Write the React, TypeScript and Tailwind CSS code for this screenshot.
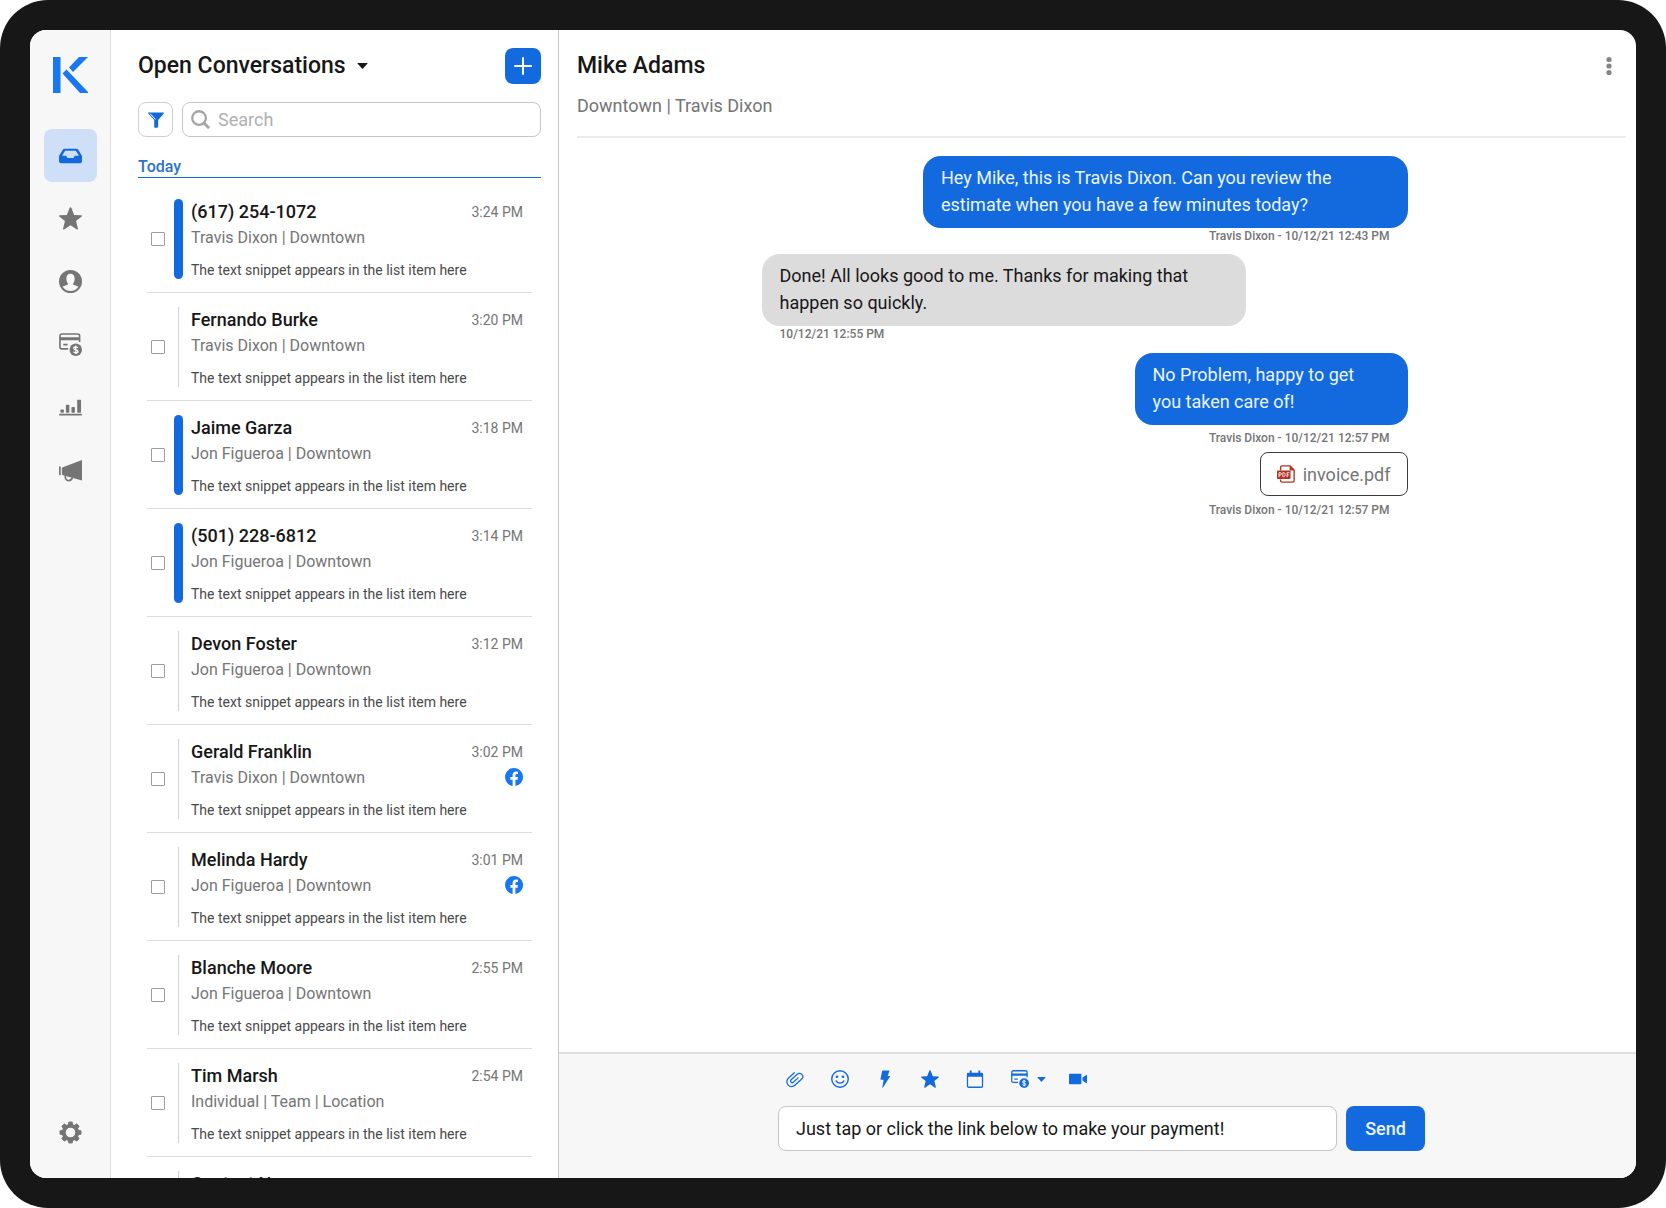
import { useState } from 'react';
import type { ReactNode } from 'react';
import clsx from 'clsx';

type IconProps = { className?: string };

type Conversation = {
  name: string;
  owner: string;
  time: string;
  unread?: boolean;
  facebook?: boolean;
};

const SNIPPET = 'The text snippet appears in the list item here';

const conversations: Conversation[] = [
  { name: '(617) 254-1072', owner: 'Travis Dixon | Downtown', time: '3:24 PM', unread: true },
  { name: 'Fernando Burke', owner: 'Travis Dixon | Downtown', time: '3:20 PM' },
  { name: 'Jaime Garza', owner: 'Jon Figueroa | Downtown', time: '3:18 PM', unread: true },
  { name: '(501) 228-6812', owner: 'Jon Figueroa | Downtown', time: '3:14 PM', unread: true },
  { name: 'Devon Foster', owner: 'Jon Figueroa | Downtown', time: '3:12 PM' },
  { name: 'Gerald Franklin', owner: 'Travis Dixon | Downtown', time: '3:02 PM', facebook: true },
  { name: 'Melinda Hardy', owner: 'Jon Figueroa | Downtown', time: '3:01 PM', facebook: true },
  { name: 'Blanche Moore', owner: 'Jon Figueroa | Downtown', time: '2:55 PM' },
  { name: 'Tim Marsh', owner: 'Individual | Team | Location', time: '2:54 PM' },
  { name: 'Contact Name', owner: 'Individual | Team | Location', time: '2:34 PM' },
];

function LogoIcon({ className }: IconProps) {
  return (
    <svg viewBox="-1 0 36 36" fill="currentColor" className={className} aria-hidden="true">
      <path d="M0 0h7.500v36H0z" />
      <path d="M26 0h9L20 15l-4-4.500z" />
      <path d="M9.500 16.500l4-4L36 36h-9z" />
    </svg>
  );
}

function InboxIcon({ className }: IconProps) {
  return (
    <svg viewBox="0 0 24 24" fill="currentColor" className={className} aria-hidden="true">
      <path
        fillRule="evenodd"
        d="M5.500 5h13c.6 0 1.100.3 1.400.8l3.700 6c.2.3.4.8.4 1.200v5c0 1.100-.9 2-2 2H2c-1.100 0-2-.9-2-2v-5c0-.4.1-.9.400-1.200l3.700-6c.3-.5.800-.8 1.400-.8zM6.400 7l-3.200 5.300h4c.5 0 .8.2.9.700l.2.700c.2.500.5.800 1 .8h5.400c.5 0 .8-.3 1-.8l.2-.7c.1-.5.4-.7.9-.7h4L17.600 7z"
      />
    </svg>
  );
}

function StarIcon({ className }: IconProps) {
  return (
    <svg viewBox="0 0 24 24" fill="currentColor" className={className} aria-hidden="true">
      <path d="M12 .3c.4 0 .7.2.9.600l2.900 7.400 7.500.4c.7 0 .9.800.4 1.200l-5.900 4.800 2 8c.1.7-.5 1.100-1.100.8L12 19.100l-6.700 4.400c-.6.300-1.200-.1-1.100-.8l2-8L.3 9.900c-.5-.4-.3-1.200.4-1.200l7.500-.4 2.900-7.400c.2-.4.5-.6.9-.600z" />
    </svg>
  );
}

function UserIcon({ className }: IconProps) {
  return (
    <svg viewBox="0 0 24 24" fill="currentColor" className={className} aria-hidden="true">
      <path
        fillRule="evenodd"
        d="M12 0a12 12 0 1 0 0 24 12 12 0 0 0 0-24zM3.700 17.600c1.500-1 3.300-1.500 4.600-2 .9-.3 1.200-.8 1-1.500-1-1.300-1.600-2.900-1.600-5C7.700 5.800 9.300 4 12 4s4.300 1.800 4.300 5.100c0 2.100-.6 3.700-1.600 5-.2.700.1 1.200 1 1.500 1.300.5 3.100 1 4.600 2a10 10 0 0 1-16.600 0z"
      />
    </svg>
  );
}

function PaymentIcon({ className }: IconProps) {
  return (
    <svg viewBox="0 0 24 24" fill="none" className={className} aria-hidden="true">
      <path
        d="M9.500 16.500H3a2 2 0 0 1-2-2V3a2 2 0 0 1 2-2h16.500a2 2 0 0 1 2 2v6.500"
        stroke="currentColor"
        strokeWidth="1.700"
      />
      <path d="M1 4.500h20.500v3H1zM4.500 11.200H9v1.800H4.500z" fill="currentColor" />
      <circle cx="17.500" cy="17.500" r="6.500" fill="currentColor" />
      <path
        d="M19.700 15.600c-.3-.8-1.200-1.200-2.200-1.200-1.200 0-2.200.6-2.200 1.600 0 2.200 4.500 1 4.500 3.200 0 1-1 1.500-2.300 1.500-1.100 0-2-.4-2.300-1.300M17.500 13v9"
        stroke="white"
        strokeWidth="1.300"
      />
    </svg>
  );
}

function ChartIcon({ className }: IconProps) {
  return (
    <svg viewBox="0 0 24 24" fill="currentColor" className={className} aria-hidden="true">
      <rect x="0" y="18.500" width="24" height="1.800" rx=".8" />
      <rect x="1.500" y="14" width="3.600" height="3.600" rx=".8" />
      <rect x="7.200" y="9" width="3.600" height="8.600" rx=".8" />
      <rect x="13" y="11.500" width="3.600" height="6.100" rx=".8" />
      <rect x="19" y="4" width="4" height="13.600" rx=".8" />
    </svg>
  );
}

function MegaphoneIcon({ className }: IconProps) {
  return (
    <svg viewBox="0 0 24 24" fill="currentColor" className={className} aria-hidden="true">
      <path d="M24 1v21.500L4 17V8.500z" />
      <rect x="0" y="7.500" width="1.800" height="9.500" rx=".9" />
      <path d="M3 9h1.500v7.500H3z" />
      <path d="M6.600 17.500c-.4 3 1.100 5 3.400 5s3.500-1.300 3.900-3.200" fill="none" stroke="currentColor" strokeWidth="1.700" />
    </svg>
  );
}

function GearIcon({ className }: IconProps) {
  return (
    <svg viewBox="0 0 24 24" className={className} aria-hidden="true">
      <circle cx="12" cy="12" r="7" fill="none" stroke="currentColor" strokeWidth="4" />
      {[0, 45, 90, 135, 180, 225, 270, 315].map((angle) => (
        <path
          key={angle}
          d="M9.500 4.500L10.200 1h3.600L14.500 4.500z"
          fill="currentColor"
          stroke="currentColor"
          strokeWidth=".8"
          strokeLinejoin="round"
          transform={`rotate(${angle} 12 12)`}
        />
      ))}
    </svg>
  );
}

function FilterIcon({ className }: IconProps) {
  return (
    <svg viewBox="0 0 16 16" className={className} aria-hidden="true">
      <path
        d="M.6.500h14.800c.5 0 .7.500.4.900L10.200 8v6.600c0 .8-.4 1.200-1.200 1.200H7.200c-.6 0-1-.4-1-1V8L.2 1.400C-.1 1 .1.500.6.500z"
        fill="currentColor"
      />
      <path d="M2.500 2l4.700 5.200" stroke="white" strokeWidth="1" strokeLinecap="round" />
    </svg>
  );
}

function SearchIcon({ className }: IconProps) {
  return (
    <svg viewBox="0 0 20 20" fill="none" stroke="currentColor" className={className} aria-hidden="true">
      <circle cx="8.500" cy="8.500" r="7.200" strokeWidth="2.400" />
      <path d="M13.700 13.700l4.400 4.400" strokeWidth="3" strokeLinecap="round" />
    </svg>
  );
}

function PlusIcon({ className }: IconProps) {
  return (
    <svg viewBox="0 0 18 18" fill="none" stroke="currentColor" className={className} aria-hidden="true">
      <path d="M9 1v16M1 9h16" strokeWidth="2" strokeLinecap="round" />
    </svg>
  );
}

function CaretIcon({ className }: IconProps) {
  return (
    <svg viewBox="0 0 10 6" fill="currentColor" className={className} aria-hidden="true">
      <path d="M.5 0h9c.5 0 .6.400.3.700L5.500 5.500c-.3.300-.7.300-1 0L.2.700C-.1.400 0 0 .5 0z" />
    </svg>
  );
}

function FacebookIcon({ className }: IconProps) {
  return (
    <svg viewBox="0 0 24 24" fill="currentColor" className={className} aria-hidden="true">
      <path d="M24 12.070C24 5.400 18.630 0 12 0S0 5.400 0 12.070C0 18.100 4.390 23.100 10.130 24v-8.440H7.080v-3.490h3.050V9.410c0-3.020 1.790-4.690 4.530-4.690 1.310 0 2.680.240 2.680.240v2.970h-1.510c-1.490 0-1.960.930-1.960 1.890v2.250h3.330l-.530 3.490h-2.800V24C19.610 23.100 24 18.100 24 12.070z" />
    </svg>
  );
}

function DotsIcon({ className }: IconProps) {
  return (
    <svg viewBox="0 0 6 20" fill="currentColor" className={className} aria-hidden="true">
      <circle cx="3" cy="3.500" r="2.600" />
      <circle cx="3" cy="10" r="2.600" />
      <circle cx="3" cy="16.500" r="2.600" />
    </svg>
  );
}

function ClipIcon({ className }: IconProps) {
  return (
    <svg viewBox="0 0 24 24" fill="none" stroke="currentColor" className={className} aria-hidden="true">
      <path
        d="M16 13.700H7.500a2.200 2.200 0 0 1 0-4.400H18.500a4.400 4.400 0 0 1 0 8.800H6.200a6.400 6.400 0 0 1 0-12.800H17"
        strokeWidth="1.700"
        strokeLinecap="round"
        transform="rotate(-43 12 12)"
      />
    </svg>
  );
}

function SmileIcon({ className }: IconProps) {
  return (
    <svg viewBox="0 0 24 24" fill="none" stroke="currentColor" className={className} aria-hidden="true">
      <circle cx="12" cy="12" r="11" strokeWidth="1.900" />
      <path d="M6.800 14.500c2 4 8.400 4 10.400 0" strokeWidth="1.900" strokeLinecap="round" />
      <circle cx="8" cy="9" r="1.800" fill="currentColor" stroke="none" />
      <circle cx="16" cy="9" r="1.800" fill="currentColor" stroke="none" />
    </svg>
  );
}

function BoltIcon({ className }: IconProps) {
  return (
    <svg viewBox="0 0 24 24" fill="currentColor" className={className} aria-hidden="true">
      <path d="M9 .5h8.500c.4 0 .6.400.4.700L15.500 8h2.700c.5 0 .7.500.5.800L9.300 23.400c-.3.500-1 .2-.9-.3L10.200 13H6.700c-.5 0-.8-.4-.7-.9L8.200 1.200c.1-.4.4-.7.800-.7z" />
    </svg>
  );
}

function CalendarIcon({ className }: IconProps) {
  return (
    <svg viewBox="0 0 24 24" fill="none" className={className} aria-hidden="true">
      <rect x="2" y="4.500" width="20" height="18.500" rx="1.500" stroke="currentColor" strokeWidth="1.700" />
      <path d="M1.500 4h21v5h-21zM5 .5h2.500V5H5zM16.500.5H19V5h-2.500z" fill="currentColor" />
    </svg>
  );
}

function VideoIcon({ className }: IconProps) {
  return (
    <svg viewBox="0 0 24 24" fill="currentColor" className={className} aria-hidden="true">
      <rect x="0" y="5" width="16.500" height="14" rx="1" />
      <path d="M23.200 6.500c.4-.3.8 0 .8.500v10c0 .5-.4.800-.8.500L18 14V10z" />
    </svg>
  );
}

function PdfIcon({ className }: IconProps) {
  return (
    <svg viewBox="0 0 20 20" fill="none" className={className} aria-hidden="true">
      <path
        d="M4 6V2.500C4 1.600 4.600 1 5.500 1h9L19 5.500v12c0 .9-.6 1.500-1.500 1.500h-12C4.600 19 4 18.400 4 17.500V16"
        stroke="currentColor"
        strokeWidth="1.500"
      />
      <path d="M14 .5L19.500 6H14z" fill="currentColor" />
      <rect x="0" y="6" width="15" height="9.500" rx="1" fill="currentColor" />
      <path
        d="M2.200 13.500V8.500h1.300a1.300 1.300 0 0 1 0 2.700H2.200M6.500 8.500v4.500h.9c2.300 0 2.300-4.500 0-4.500zM11.300 13.500V8.500h2.500M11.300 11h2"
        stroke="white"
        strokeWidth="1"
      />
    </svg>
  );
}

const navigation = [
  { label: 'Inbox', icon: InboxIcon },
  { label: 'Favorites', icon: StarIcon },
  { label: 'Contacts', icon: UserIcon },
  { label: 'Payments', icon: PaymentIcon },
  { label: 'Reports', icon: ChartIcon },
  { label: 'Campaigns', icon: MegaphoneIcon },
];

function Sidebar() {
  return (
    <aside className="flex w-[81px] shrink-0 flex-col items-center border-r border-[#dcdcdc] bg-[#f7f7f7] pt-[27px] pb-[19px]">
      <a href="#home" aria-label="Home">
        <LogoIcon className="size-9 text-[#1877f2]" />
      </a>

      <nav className="mt-9 flex flex-col gap-[10px]">
        {navigation.map((item, index) => {
          const Icon = item.icon;
          const active = index === 0;

          return (
            <a
              key={item.label}
              href={`#${item.label.toLowerCase()}`}
              aria-label={item.label}
              className={clsx(
                'grid size-[53px] place-items-center rounded-lg',
                active ? 'bg-[#d0dff8] text-[#136adf]' : 'text-[#757575]',
              )}
            >
              <Icon className="size-[23px]" />
            </a>
          );
        })}
      </nav>

      <a
        href="#settings"
        aria-label="Settings"
        className="mt-auto grid size-[53px] place-items-center text-[#757575]"
      >
        <GearIcon className="size-[23px]" />
      </a>
    </aside>
  );
}

function ConversationItem({ item }: { item: Conversation }) {
  return (
    <li className="flex h-[108px] shrink-0 items-center border-b border-[#dcdcdc] pr-[9px] pl-1">
      <input
        type="checkbox"
        aria-label={`Select ${item.name}`}
        className="size-[14px] shrink-0 appearance-none rounded-[1px] border border-[#9e9e9e] bg-white checked:bg-[#136adf]"
      />
      <span className="ml-2 flex h-20 w-[10px] shrink-0 justify-center">
        <span className={item.unread ? 'w-[9px] rounded-full bg-[#136adf]' : 'w-px bg-[#d2d2d2]'} />
      </span>
      <div className="ml-2 h-20 min-w-0 flex-1">
        <div className="flex items-center justify-between">
          <h3 className="text-[18px] leading-[26px] font-medium text-[#171717]">{item.name}</h3>
          <time className="text-[14px] leading-[26px] text-[#757575]">{item.time}</time>
        </div>
        <div className="flex items-center justify-between">
          <p className="text-[16px] leading-[25px] text-[#757575]">{item.owner}</p>
          {item.facebook ? <FacebookIcon className="size-[18px] text-[#1877f2]" /> : null}
        </div>
        <p className="mt-2 text-[14px] leading-[24px] text-[#4a4a4a]">{SNIPPET}</p>
      </div>
    </li>
  );
}

function ConversationList() {
  return (
    <section className="flex w-[448px] shrink-0 flex-col overflow-hidden border-r border-[#c8c8c8] pr-[17px] pl-[27px]">
      <header className="flex items-center justify-between pt-[18px]">
        <button type="button" className="flex items-center gap-[11px] text-[#171717]">
          <span className="text-[23px] leading-9 font-medium">Open Conversations</span>
          <CaretIcon className="h-[6px] w-[11px]" />
        </button>
        <button
          type="button"
          aria-label="New conversation"
          className="grid size-9 place-items-center rounded-lg bg-[#136adf] text-white"
        >
          <PlusIcon className="size-[18px]" />
        </button>
      </header>

      <div className="mt-[18px] flex gap-[9px]">
        <button
          type="button"
          aria-label="Filter"
          className="grid size-[35px] shrink-0 place-items-center rounded-lg border border-[#cfcfcf] text-[#136adf]"
        >
          <FilterIcon className="size-4" />
        </button>
        <label className="flex h-[35px] flex-1 items-center gap-2 rounded-lg border border-[#c6c6c6] px-2 text-[#a6a6a6]">
          <SearchIcon className="size-[19px]" />
          <input
            type="search"
            aria-label="Search"
            placeholder="Search"
            className="min-w-0 flex-1 text-[18px] text-[#171717] outline-none placeholder:text-[#b0b0b0]"
          />
        </label>
      </div>

      <h2 className="mt-5 border-b border-[#136adf] text-[16px] leading-5 font-medium text-[#2a73cf]">
        Today
      </h2>

      <ul className="mt-[7px] flex min-h-0 flex-1 flex-col overflow-hidden px-[9px]">
        {conversations.map((item) => (
          <ConversationItem key={item.name} item={item} />
        ))}
      </ul>
    </section>
  );
}

function Meta({ children, className }: { children: ReactNode; className?: string }) {
  return (
    <p className={clsx('px-[18px] text-[12px] leading-4 font-medium text-[#757575]', className)}>
      {children}
    </p>
  );
}

function Bubble({ children, className }: { children: ReactNode; className: string }) {
  return (
    <p className={clsx('rounded-[18px] px-[18px] pt-2 pb-[10px] text-[18px] leading-[27px]', className)}>
      {children}
    </p>
  );
}

function Messages() {
  return (
    <div className="flex-1 pt-[18px] pr-[26px]">
      <div className="mx-auto flex w-full max-w-[646px] flex-col">
        <Bubble className="w-3/4 self-end bg-[#136adf] text-[#eaf5ff]">
          Hey Mike, this is Travis Dixon. Can you review the
          <br />
          estimate when you have a few minutes today?
        </Bubble>
        <Meta className="self-end">Travis Dixon - 10/12/21 12:43 PM</Meta>

        <Bubble className="mt-[10px] w-3/4 self-start bg-[#dcdcdc] text-[#171717]">
          Done! All looks good to me. Thanks for making that
          <br />
          happen so quickly.
        </Bubble>
        <Meta className="self-start">10/12/21 12:55 PM</Meta>

        <Bubble className="mt-[11px] w-[273px] self-end bg-[#136adf] text-[#eaf5ff]">
          No Problem, happy to get
          <br />
          you taken care of!
        </Bubble>
        <Meta className="mt-[5px] self-end">Travis Dixon - 10/12/21 12:57 PM</Meta>

        <a
          href="#invoice"
          className="mt-[6px] flex h-11 w-[148px] items-center justify-between self-end rounded-lg border border-[#3c3c3c] px-4 text-[18px] text-[#757575]"
        >
          <PdfIcon className="size-[18px] text-[#b5301f]" />
          invoice.pdf
        </a>
        <Meta className="mt-[6px] self-end">Travis Dixon - 10/12/21 12:57 PM</Meta>
      </div>
    </div>
  );
}

const tools = [
  { label: 'Attach file', icon: ClipIcon },
  { label: 'Emoji', icon: SmileIcon },
  { label: 'Quick replies', icon: BoltIcon },
  { label: 'Request review', icon: StarIcon },
  { label: 'Schedule', icon: CalendarIcon },
  { label: 'Payments', icon: PaymentIcon, menu: true },
  { label: 'Video call', icon: VideoIcon },
];

function Composer() {
  const [message, setMessage] = useState('Just tap or click the link below to make your payment!');

  return (
    <footer className="border-t-2 border-[#dedede] bg-[#f7f7f7] pt-4 pb-[27px] pl-2">
      <div className="mx-auto w-full max-w-[647px]">
        <div className="flex gap-[27px] px-2">
          {tools.map((tool) => {
            const Icon = tool.icon;

            return (
              <button
                key={tool.label}
                type="button"
                aria-label={tool.label}
                className={clsx('flex items-center gap-2 text-[#136adf]', tool.menu && '-mr-1')}
              >
                <Icon className="size-[18px]" />
                {tool.menu ? <CaretIcon className="h-[5px] w-[9px]" /> : null}
              </button>
            );
          })}
        </div>

        <form className="mt-[18px] flex gap-[9px]" onSubmit={(event) => event.preventDefault()}>
          <input
            type="text"
            aria-label="Message"
            value={message}
            onChange={(event) => setMessage(event.target.value)}
            className="h-[45px] min-w-0 flex-1 rounded-lg border border-[#c6c6c6] bg-white px-[17px] text-[18px] text-[#171717] outline-none"
          />
          <button
            type="submit"
            className="h-[45px] w-[79px] rounded-lg bg-[#136adf] text-[18px] font-medium text-[#eaf5ff]"
          >
            Send
          </button>
        </form>
      </div>
    </footer>
  );
}

function Chat() {
  return (
    <main className="flex min-w-0 flex-1 flex-col">
      <header className="mr-[10px] ml-[18px] flex items-start justify-between border-b-2 border-[#ececec] pt-[18px] pr-[14px] pb-[17px]">
        <div>
          <h1 className="text-[23px] leading-9 font-medium text-[#171717]">Mike Adams</h1>
          <p className="mt-2 text-[18px] leading-[27px] text-[#757575]">Downtown | Travis Dixon</p>
        </div>
        <button type="button" aria-label="More options" className="grid h-9 place-items-center text-[#858585]">
          <DotsIcon className="h-5 w-[6px]" />
        </button>
      </header>
      <Messages />
      <Composer />
    </main>
  );
}

export default function App() {
  return (
    <div className="h-screen bg-white font-[Roboto,sans-serif]">
      <div className="h-full rounded-[48px] bg-[#171717] p-[30px]">
        <div className="flex h-full overflow-hidden rounded-2xl bg-white">
          <Sidebar />
          <ConversationList />
          <Chat />
        </div>
      </div>
    </div>
  );
}
